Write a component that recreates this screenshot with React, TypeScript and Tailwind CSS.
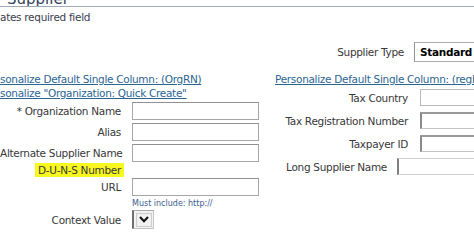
import React from "react";

const Chevron = () => (
  <svg width="10" height="7" viewBox="0 0 10 7" fill="none">
    <path d="M1 1 L5 5.2 L9 1" stroke="#111" strokeWidth="2" />
  </svg>
);

function LeftRow({ label, input = true, className = "" }: { label: string; input?: boolean; className?: string }) {
  return (
    <div className={"flex items-center h-[18px] " + className}>
      <div className="w-[121px] text-right whitespace-nowrap">{label}</div>
      {input && <div className="ml-[11px] w-[127px] h-[18px] border border-[#a6a6a6] border-t-[#919191] bg-white" />}
    </div>
  );
}

function RightRow({ label, variant }: { label: string; variant: "light" | "inset" }) {
  return (
    <div className="flex items-center h-[17px]">
      <div className="w-[133px] text-right whitespace-nowrap">{label}</div>
      {variant === "light" ? (
        <div className="ml-[12px] w-[80px] h-[17px] border border-[#b9b9b9] bg-white" />
      ) : (
        <div className="ml-[12px] w-[80px] h-[17px] border border-[#c4c4c4] border-l-2 border-l-[#8a8a8a] border-t-2 border-t-[#9a9a9a] bg-white" />
      )}
    </div>
  );
}

export default function App() {
  return (
    <div className="w-[474px] h-[248px] overflow-hidden bg-white text-[#383838] font-['DejaVu_Sans',sans-serif] text-[10.5px] leading-[14px] tracking-[-0.3px]">
      <div className="w-[620px]">
        {/* Header */}
        <div className="h-[7px] border-b border-[#9fa9b7] overflow-hidden">
          <div className="mt-[-10px] ml-[7px] text-[15px] leading-[18px] text-[#34425a] tracking-normal">Supplier</div>
        </div>
        <div className="mt-[3px] text-[#3a4150] whitespace-nowrap">ates required field</div>

        {/* Supplier type */}
        <div className="mt-[18px] flex items-center h-[20px]">
          <div className="w-[404px] text-right whitespace-nowrap">Supplier Type</div>
          <div className="ml-[10px] w-[100px] h-[20px] border border-[#adadad] border-l-[#8f8f8f] pl-[5px] flex items-center font-bold text-black whitespace-nowrap">
            Standard
          </div>
        </div>

        <div className="mt-[10px] flex">
          {/* Left column */}
          <div className="w-[275px] shrink-0">
            <div className="text-[#2b6592] underline whitespace-nowrap">sonalize Default Single Column: (OrgRN)</div>
            <div className="text-[#2b6592] underline whitespace-nowrap">sonalize "Organization: Quick Create"</div>
            <div className="mt-[2px] flex flex-col">
              <LeftRow label="* Organization Name" />
              <LeftRow label="Alias" className="mt-[3px]" />
              <LeftRow label="Alternate Supplier Name" className="mt-[3px]" />
              <div className="mt-[1px] flex h-[14px]">
                <div className="w-[124px] flex justify-end">
                  <span className="bg-[#f8f820] px-[3px] h-[14px] leading-[14px] whitespace-nowrap">D-U-N-S Number</span>
                </div>
              </div>
              <LeftRow label="URL" className="mt-[1px]" />
              <div className="mt-[3px] ml-[132px] h-[10px] text-[8px] leading-[10px] tracking-normal text-[#3a5d8f] whitespace-nowrap">
                Must include: http://
              </div>
              <div className="mt-[1px] flex items-center h-[19px]">
                <div className="w-[121px] text-right whitespace-nowrap">Context Value</div>
                <div className="ml-[11px] w-[22px] h-[19px] border border-[#c2c2c2] border-l-2 border-l-[#6f6f6f] border-t-[#a9a9a9] bg-[#f3f3f3] flex items-center justify-center">
                  <div className="w-[16px] h-[14px] border border-[#cdcdcd] bg-[#f1f1f1] flex items-center justify-center">
                    <Chevron />
                  </div>
                </div>
              </div>
            </div>
          </div>

          {/* Right column */}
          <div className="shrink-0">
            <div className="text-[#2b6592] underline whitespace-nowrap">Personalize Default Single Column: (regInfoRN)</div>
            <div className="mt-[3px] flex flex-col gap-[6px]">
              <RightRow label="Tax Country" variant="light" />
              <RightRow label="Tax Registration Number" variant="inset" />
              <RightRow label="Taxpayer ID" variant="inset" />
              <div className="flex items-center h-[17px]">
                <div className="w-[112px] text-right whitespace-nowrap">Long Supplier Name</div>
                <div className="ml-[10px] w-[100px] h-[17px] border border-[#d0d0d0] border-l-2 border-l-[#7f7f7f] bg-white" />
              </div>
            </div>
          </div>
        </div>
      </div>
    </div>
  );
}
